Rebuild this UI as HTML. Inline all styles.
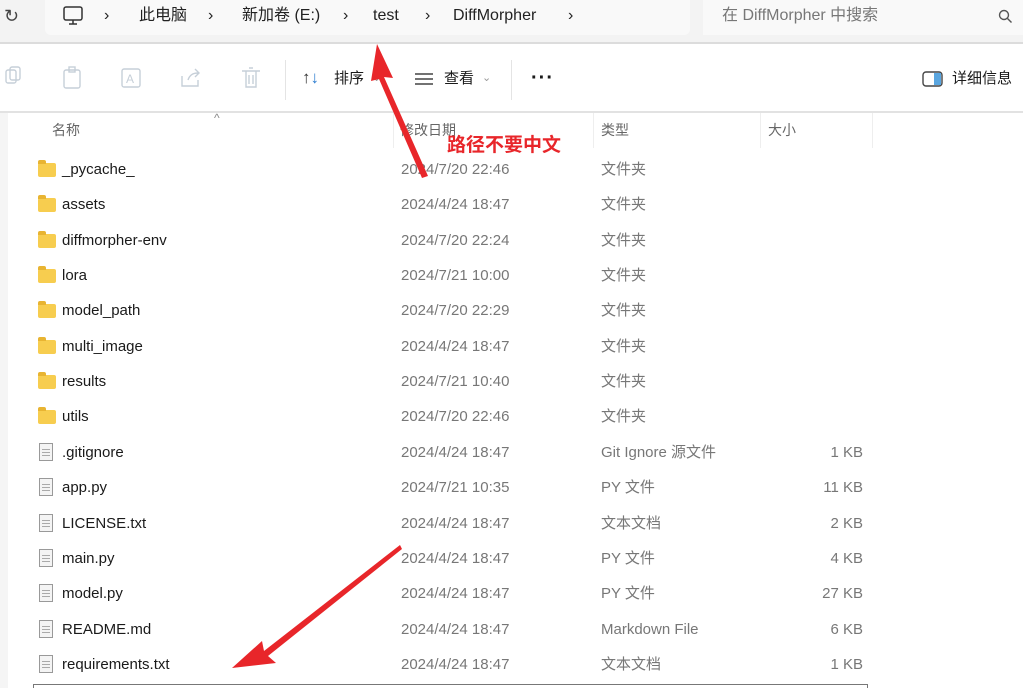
<!DOCTYPE html>
<html><head><meta charset="utf-8"><style>
*{margin:0;padding:0;box-sizing:border-box}
body{width:1023px;height:688px;overflow:hidden;background:#fff;font-family:"Liberation Sans","Noto Sans CJK SC",sans-serif;color:#1a1a1a;position:relative}
.a{position:absolute;white-space:nowrap;line-height:20px}
.top{position:absolute;left:0;top:0;width:1023px;height:44px;background:#f3f3f3;border-bottom:2px solid #dcdcdc}
.addr{position:absolute;left:45px;top:0;width:645px;height:35px;background:#f9f9f9;border-radius:0 0 6px 6px}
.srch{position:absolute;left:703px;top:0;width:320px;height:35px;background:#f9f9f9}
.bc{font-size:16px;top:6px;color:#222}
.tb{position:absolute;left:0;top:44px;width:1023px;height:69px;background:#fff;border-bottom:2px solid #e2e2e2}
.side{position:absolute;left:0;top:113px;width:8px;height:575px;background:#f5f5f5}
.row{font-size:15px;color:#1a1a1a}
.dt{font-size:15px;color:#777}
.ty{font-size:15px;color:#777}
.fo{position:absolute;width:18px;height:14px;background:#f7cd4f;border-radius:2px}
.fo:before{content:"";position:absolute;left:0;top:-3px;width:8px;height:4px;background:#e8b432;border-radius:2px 2px 0 0}
.fi{position:absolute;width:14px;height:18px;border:1px solid #999;background:#f4f4f4}
.fi i{position:absolute;left:2px;right:2px;height:1px;background:#aaa}
</style></head><body>
<div class="top"></div>
<div class="addr"></div>
<div class="srch"></div>
<div class="a" style="left:4px;top:6px;font-size:18px;color:#444">↻</div>
<svg class="a" style="left:62px;top:6px" width="22" height="20"><rect x="2" y="1" width="18" height="13" rx="2" fill="none" stroke="#333" stroke-width="1.5"/><path d="M7 18h8M11 14v4" stroke="#333" stroke-width="1.5"/></svg>
<div class="a bc" style="left:104px">›</div>
<div class="a bc" style="left:139px">此电脑</div>
<div class="a bc" style="left:208px">›</div>
<div class="a bc" style="left:242px">新加卷 (E:)</div>
<div class="a bc" style="left:343px">›</div>
<div class="a bc" style="left:373px">test</div>
<div class="a bc" style="left:425px">›</div>
<div class="a bc" style="left:453px">DiffMorpher</div>
<div class="a bc" style="left:568px">›</div>
<div class="a" style="left:722px;top:6px;font-size:16px;color:#777">在 DiffMorpher 中搜索</div>
<svg class="a" style="left:998px;top:9px" width="16" height="16"><circle cx="6" cy="6" r="4.5" fill="none" stroke="#555" stroke-width="1.4"/><path d="M9.5 9.5l4 4" stroke="#555" stroke-width="1.4"/></svg>
<div class="tb"></div>
<svg class="a" style="left:0;top:64px" width="270" height="30" fill="none" stroke="#c6cfd8" stroke-width="1.4">
<rect x="6" y="6" width="10" height="13" rx="2"/><rect x="10" y="3" width="10" height="13" rx="2"/>
<rect x="64" y="6" width="16" height="18" rx="2"/><rect x="69" y="3" width="6" height="5"/>
<rect x="122" y="5" width="18" height="18" rx="2"/><text x="126" y="19" font-size="12" fill="#c6cfd8" stroke="none">A</text>
<path d="M182 12v10h16v-6M188 16c2-6 6-7 10-7M195 5l4 4-4 4"/>
<path d="M242 7h18M246 7v16h10V7M249 4h4M249 11v9M253 11v9"/>
</svg>
<div class="a" style="left:285px;top:60px;width:1px;height:40px;background:#e4e4e4"></div>
<div class="a" style="left:302px;top:68px;font-size:17px;color:#333">↑<span style="color:#2f7fd1">↓</span></div>
<div class="a" style="left:334px;top:69px;font-size:15px">排序</div>
<div class="a" style="left:372px;top:68px;font-size:11px;color:#999">⌄</div>
<svg class="a" style="left:414px;top:72px" width="20" height="14"><path d="M1 2h18M1 7h18M1 12h18" stroke="#444" stroke-width="1.4"/></svg>
<div class="a" style="left:444px;top:69px;font-size:15px">查看</div>
<div class="a" style="left:482px;top:68px;font-size:11px;color:#999">⌄</div>
<div class="a" style="left:511px;top:60px;width:1px;height:40px;background:#e4e4e4"></div>
<div class="a" style="left:531px;top:68px;font-size:20px;font-weight:bold;letter-spacing:1px">···</div>
<svg class="a" style="left:922px;top:71px" width="22" height="16"><rect x="1" y="1" width="19" height="14" rx="3" fill="none" stroke="#444" stroke-width="1.4"/><rect x="12" y="2" width="7" height="12" fill="#5aa6e0"/></svg>
<div class="a" style="left:952px;top:69px;font-size:15px">详细信息</div>
<div class="side"></div>
<div class="a" style="left:214px;top:108px;font-size:12px;color:#888">^</div>
<div class="a" style="left:52px;top:120px;font-size:14px;color:#666">名称</div>
<div class="a" style="left:400px;top:120px;font-size:14px;color:#666">修改日期</div>
<div class="a" style="left:601px;top:120px;font-size:14px;color:#666">类型</div>
<div class="a" style="left:768px;top:120px;font-size:14px;color:#666">大小</div>
<div class="a" style="left:393px;top:113px;width:1px;height:35px;background:#eee"></div>
<div class="a" style="left:593px;top:113px;width:1px;height:35px;background:#eee"></div>
<div class="a" style="left:760px;top:113px;width:1px;height:35px;background:#eee"></div>
<div class="a" style="left:872px;top:113px;width:1px;height:35px;background:#eee"></div>
<div id="rows"></div>
<div class="a" style="left:33px;top:684px;width:835px;height:4px;border:1px solid #777;border-bottom:none"></div>
<svg class="a" style="left:0;top:0" width="1023" height="688">
<polygon points="377,44 393,78 384,77 428,176 422,178 379,79 371,81" fill="#e8262a"/>
<polygon points="232,668 262,641 264,651 400,545 402,549 268,656 276,663" fill="#e8262a"/>
</svg>
<div class="a" style="left:447px;top:136px;font-size:19px;font-weight:bold;color:#e8262a">路径不要中文</div>
<script>
var d=[["_pycache_","2024/7/20 22:46","文件夹","",1],["assets","2024/4/24 18:47","文件夹","",1],["diffmorpher-env","2024/7/20 22:24","文件夹","",1],["lora","2024/7/21 10:00","文件夹","",1],["model_path","2024/7/20 22:29","文件夹","",1],["multi_image","2024/4/24 18:47","文件夹","",1],["results","2024/7/21 10:40","文件夹","",1],["utils","2024/7/20 22:46","文件夹","",1],[".gitignore","2024/4/24 18:47","Git Ignore 源文件","1 KB",0],["app.py","2024/7/21 10:35","PY 文件","11 KB",0],["LICENSE.txt","2024/4/24 18:47","文本文档","2 KB",0],["main.py","2024/4/24 18:47","PY 文件","4 KB",0],["model.py","2024/4/24 18:47","PY 文件","27 KB",0],["README.md","2024/4/24 18:47","Markdown File","6 KB",0],["requirements.txt","2024/4/24 18:47","文本文档","1 KB",0]];
var h="";d.forEach(function(r,i){var y=169+i*35.35;var t=y-9;
h+=r[4]?'<div class="fo" style="left:38px;top:'+(y-6)+'px"></div>':'<div class="fi" style="left:39px;top:'+(y-9)+'px"><i style="top:5px"></i><i style="top:8px"></i><i style="top:11px"></i></div>';
h+='<div class="a row" style="left:62px;top:'+t+'px">'+r[0]+'</div><div class="a dt" style="left:401px;top:'+t+'px">'+r[1]+'</div><div class="a ty" style="left:601px;top:'+t+'px">'+r[2]+'</div><div class="a dt" style="right:160px;top:'+t+'px">'+r[3]+'</div>';});
document.getElementById("rows").innerHTML=h;
</script>
</body></html>
